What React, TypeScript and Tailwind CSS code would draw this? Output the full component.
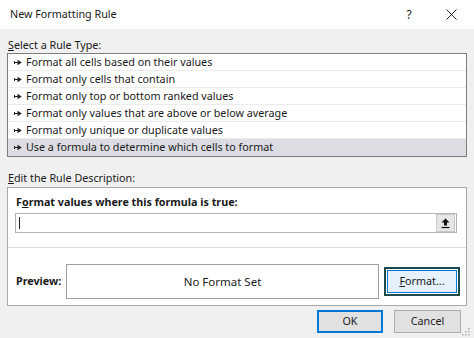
import React from "react";

const rules = [
  "Format all cells based on their values",
  "Format only cells that contain",
  "Format only top or bottom ranked values",
  "Format only values that are above or below average",
  "Format only unique or duplicate values",
  "Use a formula to determine which cells to format",
];

const Arrow = () => (
  <svg width="8" height="7" viewBox="0 0 8 7" className="shrink-0">
    <path d="M0.5 2 V5 M0.5 3.5 H4.5" stroke="#222" strokeWidth="1" />
    <path d="M3.5 0.8 L7.8 3.5 L3.5 6.2 Z" fill="#222" />
  </svg>
);

const App = () => {
  return (
    <div
      className="w-[474px] h-[338px] bg-[#f0f0f0] text-[#1a1a1a] overflow-hidden relative"
      style={{ fontFamily: '"Noto Sans", "Open Sans", sans-serif' }}
    >
      {/* Title bar */}
      <div className="h-[29px] bg-white flex items-center pl-[10px]">
        <span className="text-[10.75px]">New Formatting Rule</span>
        <span className="ml-auto text-[12px] w-[10px] text-center mr-[32px]">?</span>
        <svg width="11" height="11" viewBox="0 0 11 11" className="mr-[17px]">
          <path d="M0.5 0.5 L10.5 10.5 M10.5 0.5 L0.5 10.5" stroke="#222" strokeWidth="1" />
        </svg>
      </div>

      <div className="px-[7px]">
        <div className="h-[24px] pt-[9px] pl-[1px] text-[10.75px] leading-[14px]">
          <span className="underline">S</span>elect a Rule Type:
        </div>

        {/* Rule list */}
        <div className="h-[104px] border border-[#7e7e7e] bg-white">
          {rules.map((r, i) => (
            <div
              key={r}
              className={`h-[17px] flex items-center gap-[4px] pl-[6px] text-[10.75px] ${
                i === rules.length - 1 ? "bg-[#dcdde2]" : "border-b border-[#ececec]"
              }`}
            >
              <Arrow />
              <span>{r}</span>
            </div>
          ))}
        </div>

        <div className="h-[30px] pt-[14px] pl-[1px] text-[10.75px] leading-[14px]">
          <span className="underline">E</span>dit the Rule Description:
        </div>

        {/* Description group */}
        <div className="h-[119px] border border-[#a8a8a8] bg-white">
          <div className="mt-[7px] ml-[8px] h-[14px] leading-[14px] text-[10.75px] font-bold">
            F<span className="underline">o</span>rmat values where this formula is true:
          </div>
          <div className="mt-[4px] ml-[7px] mr-[9px] h-[20px] border border-[#b4b4b4] flex items-center">
            <div className="ml-[3px] w-px h-[12px] bg-[#222]" />
            <div className="ml-auto mr-px h-[18px] w-[19px] bg-[#e6e6e6] border border-[#c8c8c8] flex items-center justify-center">
              <svg width="9" height="11" viewBox="0 0 9 11">
                <path d="M4.5 0.5 L8.5 4.5 H6 V7.5 H3 V4.5 H0.5 Z" fill="#111" />
                <path d="M0.5 9.5 H8.5" stroke="#111" strokeWidth="1.2" />
              </svg>
            </div>
          </div>
          <div className="mt-[14px] h-px bg-[#dedede]" />
          <div className="mt-[16px] flex items-center pl-[8px] pr-[6px]">
            <span className="w-[50px] text-[10.75px] font-bold">Preview:</span>
            <div className="h-[35px] flex-1 border border-[#a0a0a0] flex items-center justify-center text-[11.5px]">
              No Format Set
            </div>
            <div className="ml-[5px] w-[76px] h-[29px] border-2 border-[#1d4a4f] p-[1px]">
              <div className="h-full border border-[#0078d7] bg-[#e5f1fb] flex items-center justify-center text-[10.75px]">
                <span className="underline">F</span>ormat...
              </div>
            </div>
          </div>
        </div>

        {/* Bottom buttons */}
        <div className="mt-[4px] flex justify-end pr-[6px] gap-[11px]">
          <button className="w-[66px] h-[23px] border-2 border-[#0078d7] bg-[#e1e1e1] text-[10.75px]">
            OK
          </button>
          <button className="w-[67px] h-[23px] border border-[#adadad] bg-[#e1e1e1] text-[10.75px]">
            Cancel
          </button>
        </div>
      </div>

      {/* Resize grip */}
      <svg width="8" height="8" viewBox="0 0 8 8" className="absolute right-[4px] bottom-[2px]">
        <rect x="6" y="0" width="1.5" height="1.5" fill="#b0b0b0" />
        <rect x="3" y="3" width="1.5" height="1.5" fill="#b0b0b0" />
        <rect x="6" y="3" width="1.5" height="1.5" fill="#b0b0b0" />
        <rect x="0" y="6" width="1.5" height="1.5" fill="#b0b0b0" />
        <rect x="3" y="6" width="1.5" height="1.5" fill="#b0b0b0" />
        <rect x="6" y="6" width="1.5" height="1.5" fill="#b0b0b0" />
      </svg>
    </div>
  );
};

export default App;
